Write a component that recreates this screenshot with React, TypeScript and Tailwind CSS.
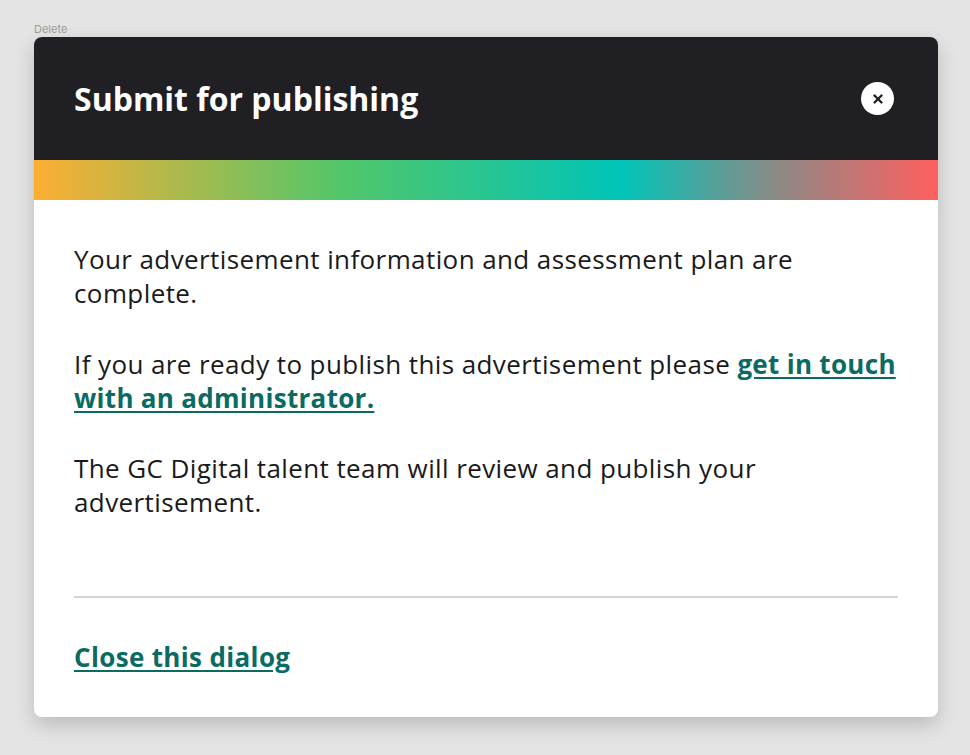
import { X } from 'lucide-react';

const font = { fontFamily: '"Open Sans", "Noto Sans", sans-serif' };

export default function App() {
  return (
    <div className="min-h-screen bg-[#e4e4e4] px-[34px] pt-[22px]" style={font}>
      <div className="text-[11px] leading-[14px] text-[#9b9b9b] mb-[1px]" style={{ fontFamily: 'Inter, sans-serif' }}>
        Delete
      </div>

      <div className="w-[904px] rounded-lg bg-white overflow-hidden shadow-[0_8px_20px_rgba(0,0,0,0.18)]">
        {/* Header */}
        <div className="h-[123px] bg-[#202024] flex items-center justify-between pl-10 pr-[44px]">
          <h1 className="text-[32px] font-bold text-white leading-none">Submit for publishing</h1>
          <button className="h-[33px] w-[33px] rounded-full bg-white flex items-center justify-center text-[#202024]">
            <X className="h-[14px] w-[14px]" strokeWidth={4} />
          </button>
        </div>
        <div className="h-[40px] bg-[linear-gradient(90deg,#fdae32_0%,#52c66a_34%,#00c4b8_65%,#8b8a86_82%,#ff5f5f_100%)]" />

        {/* Body */}
        <div className="px-10 pt-[42px] pb-[43px] text-[26px] leading-[34px] tracking-[0.4px] text-[#1a1a1a]">
          <p>Your advertisement information and assessment plan are complete.</p>
          <p className="mt-[37px]">
            If you are ready to publish this advertisement please{' '}
            <a href="#" className="font-bold tracking-[0.3px] text-[#0b6b62] underline underline-offset-[3px] decoration-2">
              get in touch with an administrator.
            </a>
          </p>
          <p className="mt-[36px]">The GC Digital talent team will review and publish your advertisement.</p>

          <div className="mt-[77px] border-t-2 border-[#d4d4d4] pt-[42px]">
            <a href="#" className="font-bold tracking-[0.35px] text-[#0b6b62] underline underline-offset-[3px] decoration-2">
              Close this dialog
            </a>
          </div>
        </div>
      </div>
    </div>
  );
}
